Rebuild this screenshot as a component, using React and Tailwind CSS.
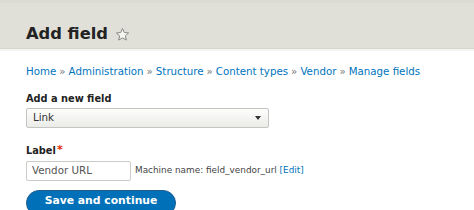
import React from "react";

const font = { fontFamily: '"DejaVu Sans", "Liberation Sans", sans-serif' };

const crumbs = ["Home", "Administration", "Structure", "Content types", "Vendor", "Manage fields"];

export default function App() {
  return (
    <div className="w-[474px] h-[210px] overflow-hidden bg-white text-[#333]" style={font}>
      <div className="h-[49px] bg-[#e0e0d8] border-t-[3px] border-[#dbdbd3] border-b border-b-[#d5d5cd] pl-[26px] flex items-end pb-[4px]">
        <h1 className="text-[16.3px] leading-[20px] font-bold text-[#232323] flex items-center gap-[7px]">
          Add field
          <svg width="15" height="15" viewBox="0 0 24 24" className="mt-[1px]">
            <path
              d="M12 2.5l2.9 6.3 6.9.7-5.2 4.6 1.5 6.8L12 17.4l-6.1 3.5 1.5-6.8L2.2 9.5l6.9-.7z"
              fill="#f4f4f0"
              stroke="#8a8a85"
              strokeWidth="1.6"
              strokeLinejoin="round"
            />
          </svg>
        </h1>
      </div>
      <div className="h-[2px] bg-[#f4f4f2]" />
      <div className="pl-[26px]">
        <div className="mt-[13px] text-[10.25px] leading-[14px] text-[#0074bd]">
          {crumbs.map((c, i) => (
            <span key={c}>
              {i > 0 && <span className="text-[#777] px-[3px]">»</span>}
              {c}
            </span>
          ))}
        </div>
        <div className="mt-[15px] text-[9.8px] font-bold leading-[12px] text-[#222]">Add a new field</div>
        <div className="mt-[3px] w-[243px] h-[20px] border border-[#c4c4c0] rounded-[2px] bg-gradient-to-b from-[#fdfdfc] to-[#ebebe8] flex items-center justify-between pl-[6px] pr-[7px] text-[10.3px] text-[#333]">
          <span>Link</span>
          <span className="w-0 h-0 border-l-[3.5px] border-r-[3.5px] border-t-[4px] border-l-transparent border-r-transparent border-t-[#333]" />
        </div>
        <div className="mt-[17px] text-[9.8px] font-bold leading-[12px] text-[#222] flex items-start">
          Label<span className="text-[#e32700] text-[11px] leading-[10px] ml-[1px]">*</span>
        </div>
        <div className="mt-[4px] flex items-center">
          <div className="w-[105px] h-[20px] border border-[#cacac6] rounded-[2px] bg-white flex items-center pl-[5px] text-[10.3px] text-[#555]">
            Vendor URL
          </div>
          <span className="ml-[4px] text-[8.9px] text-[#444]">
            Machine name: field_vendor_url <span className="text-[#0074bd]">[Edit]</span>
          </span>
        </div>
        <button className="mt-[9px] w-[150px] h-[26px] rounded-full bg-[#0071b8] border border-[#1e5c90] text-white font-bold text-[10.8px] leading-[19px] text-center flex justify-center items-start">
          Save and continue
        </button>
      </div>
    </div>
  );
}
